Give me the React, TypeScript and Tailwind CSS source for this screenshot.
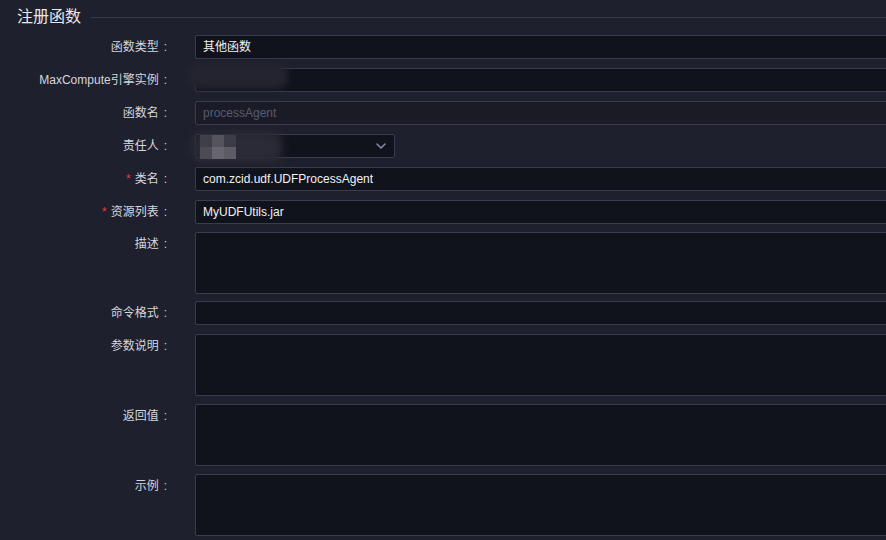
import React from "react";

const font = { fontFamily: '"Liberation Sans", "Noto Sans CJK SC", sans-serif' };

type Row = {
  label: string;
  required?: boolean;
  kind: "input" | "textarea" | "select" | "blur";
  value?: string;
  placeholder?: string;
  disabled?: boolean;
  mt: string;
};

const rows: Row[] = [
  { label: "函数类型", kind: "input", value: "其他函数", mt: "mt-0" },
  { label: "MaxCompute引擎实例", kind: "blur", mt: "mt-[9px]" },
  { label: "函数名", kind: "input", placeholder: "processAgent", disabled: true, mt: "mt-[9px]" },
  { label: "责任人", kind: "select", mt: "mt-[9px]" },
  { label: "类名", required: true, kind: "input", value: "com.zcid.udf.UDFProcessAgent", mt: "mt-[9px]" },
  { label: "资源列表", required: true, kind: "input", value: "MyUDFUtils.jar", mt: "mt-[9px]" },
  { label: "描述", kind: "textarea", mt: "mt-[8px]" },
  { label: "命令格式", kind: "input", mt: "mt-[7px]" },
  { label: "参数说明", kind: "textarea", mt: "mt-[9px]" },
  { label: "返回值", kind: "textarea", mt: "mt-[8px]" },
  { label: "示例", kind: "textarea", mt: "mt-[8px]" },
];

function Field({ r }: { r: Row }) {
  if (r.kind === "textarea") {
    return <div className="h-[62px] w-[700px] rounded-[2px] border border-[#3a3b4e] bg-[#11131c]" />;
  }
  if (r.kind === "select") {
    return (
      <div className="relative flex h-[24px] w-[200px] items-center justify-end rounded-[2px] border border-[#3a3b4e] bg-[#11131c] pr-[7px]">
        <div className="absolute left-[-4px] top-[-3px] h-[30px] w-[90px] rounded-[10px] bg-[#2a2b36] blur-[4px]" />
        <div className="absolute left-[4px] top-[0px] grid grid-cols-3 grid-rows-2">
          <div className="h-[12px] w-[12px] bg-[#3f3f4a]" />
          <div className="h-[12px] w-[12px] bg-[#55545d]" />
          <div className="h-[12px] w-[12px] bg-[#3c3c47]" />
          <div className="h-[12px] w-[12px] bg-[#4d4c55]" />
          <div className="h-[12px] w-[12px] bg-[#67656d]" />
          <div className="h-[12px] w-[12px] bg-[#5d5b63]" />
        </div>
        <svg width="12" height="12" viewBox="0 0 12 12" fill="none">
          <path d="M2 4l4 4 4-4" stroke="#8a8ea6" strokeWidth="1.5" strokeLinecap="round" strokeLinejoin="round" />
        </svg>
      </div>
    );
  }
  if (r.kind === "blur") {
    return (
      <div className="relative h-[24px] w-[700px] rounded-[2px] border border-[#3a3b4e] bg-[#11131c]">
        <div className="absolute left-[-8px] top-[-6px] h-[26px] w-[100px] rounded-[12px] bg-[#23242f] blur-[3px]" />
      </div>
    );
  }
  return (
    <div
      className={
        "flex h-[24px] w-[700px] items-center rounded-[2px] border border-[#3a3b4e] px-[7px] text-[12px] " +
        (r.disabled ? "bg-[#1a1b27] text-[#585b70]" : "bg-[#11131c] text-[#f2f2f5]")
      }
    >
      {r.value ?? r.placeholder}
    </div>
  );
}

export default function App() {
  return (
    <div className="h-[540px] w-[886px] overflow-hidden bg-[#1f202d]" style={font}>
      <div className="flex items-center pl-[17px] pt-[5px]">
        <span className="text-[16px] leading-[24px] text-[#e6e7ec]">注册函数</span>
        <div className="ml-[10px] h-px flex-1 bg-[#3a3b4c]" />
      </div>
      <div className="mt-[6px] flex flex-col">
        {rows.map((r) => (
          <div key={r.label} className={"flex items-start " + r.mt}>
            <div className="flex h-[24px] w-[170px] shrink-0 items-center justify-end pr-[3px] text-[12px] text-[#d4d6de]">
              {r.required && <span className="mr-[4px] text-[#e5393f]">*</span>}
              <span>{r.label}</span>
              <span className="ml-[5px]">:</span>
            </div>
            <div className="ml-[25px] shrink-0">
              <Field r={r} />
            </div>
          </div>
        ))}
      </div>
    </div>
  );
}
